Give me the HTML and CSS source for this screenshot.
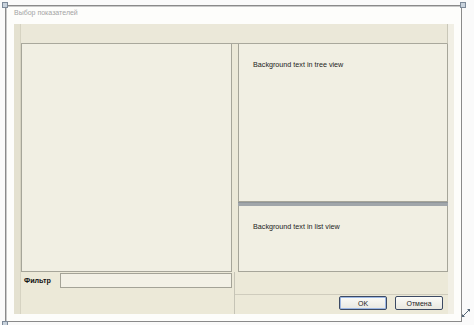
FILE: index.html
```html
<!DOCTYPE html>
<html lang="ru">
<head>
    <meta charset="UTF-8">
    <title>Выбор показателей</title>
    <link rel="stylesheet" href="styles.css">
</head>
<body>
    <div class="dialog">
        <span class="handle handle-tl"></span>
        <span class="handle handle-tr"></span>
        <span class="handle handle-bl"></span>

        <div class="title">Выбор показателей</div>

        <div class="work">
            <div class="stripe-left"></div>
            <div class="main">
                <div class="header"></div>
                <div class="panels">
                    <div class="box left-box"></div>
                    <div class="right-col">
                        <div class="box tree-box">Background text in tree view</div>
                        <div class="splitter"></div>
                        <div class="box list-box">Background text in list view</div>
                    </div>
                </div>
                <div class="bottom">
                    <div class="filter-side">
                        <div class="filter-row">
                            <span class="filter-label">Фильтр</span>
                            <input class="filter-input" type="text">
                        </div>
                    </div>
                    <div class="buttons-side">
                        <div class="spacer"></div>
                        <div class="buttons">
                            <button class="btn btn-default">OK</button>
                            <button class="btn">Отмена</button>
                        </div>
                    </div>
                </div>
            </div>
            <div class="stripe-right"></div>
        </div>
    </div>

    <svg class="grip" width="10" height="10" viewBox="0 0 10 10">
        <path d="M2 8 L8 2" stroke="#556677" stroke-width="1" fill="none"/>
        <path d="M1 6 L1 9 L4 9 Z" fill="#556677"/>
        <path d="M6 1 L9 1 L9 4 Z" fill="#556677"/>
    </svg>
</body>
</html>
```

FILE: styles.css
```css
body {
    margin: 0;
    padding: 5px;
    background: #fafafa;
    font-family: "Liberation Sans", Arial, sans-serif;
    font-size: 7.2px;
    color: #222;
    position: relative;
    width: 474px;
    height: 325px;
    box-sizing: border-box;
}

.dialog {
    position: relative;
    width: 457px;
    height: 317px;
    box-sizing: border-box;
    border: 1px solid #8a8a8a;
    box-shadow: inset 1px 1px 0 #c9c9c9;
    background: #fdfdfb;
    padding: 0 7px 7px 8px;
    display: flex;
    flex-direction: column;
}

.handle {
    position: absolute;
    width: 4px;
    height: 4px;
    border: 1px solid #7d8a99;
    background: #c8d2dc;
}

.handle-tl { left: -4px; top: -4px; }
.handle-tr { right: -5px; top: -4px; }
.handle-bl { left: -4px; bottom: -6px; }

.grip {
    position: absolute;
    left: 461px;
    top: 308px;
}

.title {
    height: 18px;
    line-height: 14px;
    color: #a4a4a4;
    font-size: 7px;
}

.work {
    flex: 1;
    display: flex;
    background: #ece9d8;
}

.stripe-left {
    width: 6px;
    background: #e4e1d0;
    border-right: 1px solid #d6d3c2;
}

.stripe-right {
    width: 6px;
    background: #f1efe5;
}

.main {
    flex: 1;
    display: flex;
    flex-direction: column;
}

.header {
    height: 19px;
    background: #ebe8d9;
    border-bottom: 1px solid #a9a89c;
    border-right: 1px solid #c9c7b8;
}

.panels {
    height: 228px;
    display: flex;
    gap: 6px;
}

.box {
    box-sizing: border-box;
    border: 1px solid #a6a599;
    border-top: none;
    background: #f1efe3;
}

.left-box {
    width: 211px;
}

.right-col {
    flex: 1;
    display: flex;
    flex-direction: column;
}

.tree-box {
    height: 158px;
    padding: 16px 0 0 14px;
}

.splitter {
    height: 4px;
    background: #a1a6aa;
    border-top: 1px solid #8f959a;
    box-sizing: border-box;
}

.list-box {
    flex: 1;
    border-top: none;
    padding: 16px 0 0 14px;
}

.bottom {
    flex: 1;
    display: flex;
}

.filter-side {
    width: 213px;
    border-right: 1px solid #c6c4b6;
}

.filter-row {
    height: 17px;
    display: flex;
    align-items: center;
}

.filter-label {
    width: 39px;
    padding-left: 3px;
    box-sizing: border-box;
    font-weight: 600;
    color: #111;
}

.filter-input {
    width: 172px;
    height: 15px;
    box-sizing: border-box;
    margin: 0;
    border: 1px solid #a4a397;
    background: #f3f1e6;
    padding: 0;
}

.buttons-side {
    flex: 1;
    display: flex;
    flex-direction: column;
}

.spacer {
    height: 22px;
    border-bottom: 1px solid #cfccbd;
}

.buttons {
    display: flex;
    justify-content: flex-end;
    gap: 8px;
    padding: 1px 5px 0 0;
}

.btn {
    width: 48px;
    height: 14px;
    margin: 0;
    padding: 0;
    box-sizing: border-box;
    border: 1px solid #3c4a63;
    border-radius: 2px;
    background: linear-gradient(#fbfbf8, #e9e8e0);
    font-family: "Liberation Sans", Arial, sans-serif;
    font-size: 7px;
    color: #222;
}

.btn-default {
    box-shadow: inset 0 0 0 1px #9db8e4;
}
```
